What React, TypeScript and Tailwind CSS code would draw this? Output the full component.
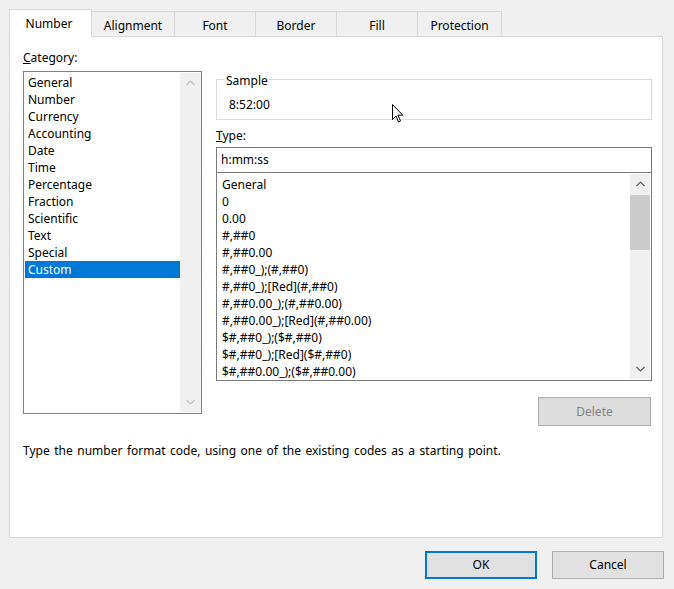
import React from "react";

const FONT = { fontFamily: '"Noto Sans", "Open Sans", sans-serif' };

const tabs = [
  { label: "Alignment", w: "w-[83px]" },
  { label: "Font", w: "w-[81px]" },
  { label: "Border", w: "w-[81px]" },
  { label: "Fill", w: "w-[81px]" },
  { label: "Protection", w: "w-[84px]" },
];

const categories = [
  "General",
  "Number",
  "Currency",
  "Accounting",
  "Date",
  "Time",
  "Percentage",
  "Fraction",
  "Scientific",
  "Text",
  "Special",
  "Custom",
];

const formats = [
  "General",
  "0",
  "0.00",
  "#,##0",
  "#,##0.00",
  "#,##0_);(#,##0)",
  "#,##0_);[Red](#,##0)",
  "#,##0.00_);(#,##0.00)",
  "#,##0.00_);[Red](#,##0.00)",
  "$#,##0_);($#,##0)",
  "$#,##0_);[Red]($#,##0)",
  "$#,##0.00_);($#,##0.00)",
];

function Chevron({ up, color }: { up?: boolean; color: string }) {
  return (
    <svg width="9" height="6" viewBox="0 0 9 6" className="block">
      <path
        d={up ? "M0.5 5 L4.5 1 L8.5 5" : "M0.5 1 L4.5 5 L8.5 1"}
        fill="none"
        stroke={color}
        strokeWidth="1.2"
      />
    </svg>
  );
}

function Scrollbar({ disabled, thumb }: { disabled?: boolean; thumb?: boolean }) {
  const c = disabled ? "#c4c4c4" : "#606060";
  return (
    <div className={`flex ${disabled ? "w-[21px]" : "w-[20px]"} shrink-0 flex-col bg-[#f0f0f0]`}>
      <div className="flex h-[20px] items-center justify-center">
        <Chevron up color={c} />
      </div>
      <div className="flex-1">
        {thumb && <div className="mt-[1px] h-[55px] w-full bg-[#cdcdcd]" />}
      </div>
      <div className="flex h-[20px] items-center justify-center">
        <Chevron color={c} />
      </div>
    </div>
  );
}

function Cursor() {
  return (
    <svg
      width="14"
      height="21"
      viewBox="0 0 14 21"
      className="absolute left-[391px] top-[103px]"
    >
      <path
        d="M1.5 1.5 L1.5 16.5 L5 13 L7.5 19 L9.5 18 L7 12.2 L11.8 12.2 Z"
        fill="#ffffff"
        stroke="#000000"
        strokeWidth="1"
        strokeLinejoin="miter"
      />
    </svg>
  );
}

export default function App() {
  return (
    <div
      className="relative h-[589px] w-[674px] overflow-hidden bg-[#f0f0f0] text-[12px] text-black"
      style={FONT}
    >
      {/* tabs */}
      <div className="flex items-end pl-[9px] pt-[9px]">
        <div className="relative z-10 -mb-px flex h-[28px] w-[83px] items-center justify-center border border-b-0 border-[#d9d9d9] bg-white pr-[3px] pt-[1px]">
          Number
        </div>
        {tabs.map((t) => (
          <div
            key={t.label}
            className={`flex h-[25px] ${t.w} items-center justify-center border border-l-0 border-b-0 border-[#d9d9d9] bg-[#f0f0f0] pt-[3px]`}
          >
            {t.label}
          </div>
        ))}
      </div>

      {/* panel */}
      <div className="ml-[9px] h-[502px] w-[654px] border border-[#d9d9d9] bg-white">
        <div className="flex pl-[13px]">
          {/* category */}
          <div className="w-[179px] shrink-0 pt-[13px]">
            <div className="h-[16px] leading-[16px]">
              <span className="underline">C</span>ategory:
            </div>
            <div className="mt-[5px] flex h-[343px] border border-[#828282] pl-[1px] pt-[1px] pb-[1px]">
              <div className="flex-1 pt-[1px]">
                {categories.map((c) => (
                  <div
                    key={c}
                    className={`h-[17px] pl-[3px] leading-[17px] ${
                      c === "Custom" ? "bg-[#0078d7] text-white" : ""
                    }`}
                  >
                    {c}
                  </div>
                ))}
              </div>
              <Scrollbar disabled />
            </div>
          </div>

          {/* right side */}
          <div className="ml-[14px] w-[436px] shrink-0 pt-[34px]">
            <fieldset className="border border-[#dcdcdc] pb-[6px]">
              <legend className="ml-[8px] h-[16px] px-[1px] pt-[3px] leading-[14px]">Sample</legend>
              <div className="mt-[10px] h-[16px] pl-[12px] leading-[16px]">8:52:00</div>
            </fieldset>

            <div className="mt-[8px] h-[16px] leading-[16px]">
              <span className="underline">T</span>ype:
            </div>
            <div className="mt-[3px] flex h-[26px] items-center border border-[#7a7a7a] pl-[4px]">
              h:mm:ss
            </div>
            <div className="flex h-[208px] overflow-hidden border border-t-0 border-[#7a7a7a] p-[1px]">
              <div className="flex-1 overflow-hidden pt-[2px]">
                {formats.map((f) => (
                  <div key={f} className="h-[17px] whitespace-nowrap pl-[4px] leading-[17px]">
                    {f}
                  </div>
                ))}
              </div>
              <Scrollbar thumb />
            </div>

            <div className="mt-[16px] flex justify-end pr-[1px]">
              <div className="flex h-[29px] w-[113px] items-center justify-center border border-[#adadad] bg-[#dddddd] text-[#838383]">
                Delete
              </div>
            </div>
          </div>
        </div>

        <div className="mt-[17px] h-[16px] pl-[13px] leading-[16px] [word-spacing:1.4px]">
          Type the number format code, using one of the existing codes as a starting point.
        </div>
      </div>

      {/* dialog buttons */}
      <div className="mt-[13px] flex justify-end gap-[15px] pr-[10px]">
        <button className="flex h-[28px] w-[112px] items-center justify-center border-2 border-[#0078d7] bg-[#e1e1e1]">
          OK
        </button>
        <button className="flex h-[28px] w-[112px] items-center justify-center border border-[#adadad] bg-[#e1e1e1]">
          Cancel
        </button>
      </div>

      <Cursor />
    </div>
  );
}
